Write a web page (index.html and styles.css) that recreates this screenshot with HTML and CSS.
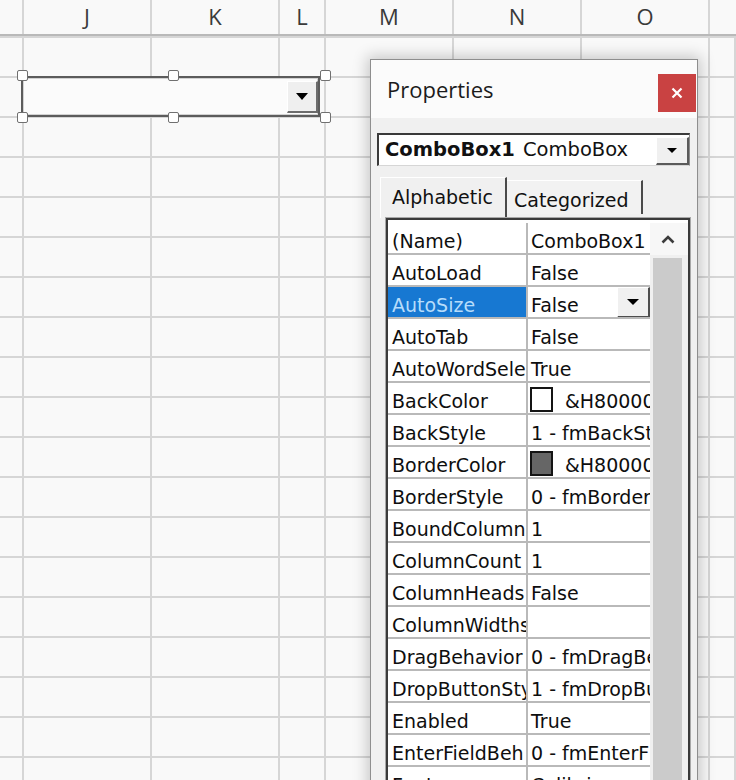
FILE: index.html
```html
<!DOCTYPE html>
<html lang="en">
<head>
<meta charset="utf-8">
<title>Properties - ComboBox1</title>
<link rel="stylesheet" href="styles.css">
</head>
<body>
<div class="sheet">
  <div class="col-heads">
    <div class="ch c-i"></div>
    <div class="ch c-j">J</div>
    <div class="ch c-k">K</div>
    <div class="ch c-l">L</div>
    <div class="ch c-m">M</div>
    <div class="ch c-n">N</div>
    <div class="ch c-o">O</div>
    <div class="ch c-p"></div>
  </div>
  <div class="cells">
    <div class="col c-i"></div>
    <div class="col c-j"></div>
    <div class="col c-k"></div>
    <div class="col c-l"></div>
    <div class="col c-m"></div>
    <div class="col c-n"></div>
    <div class="col c-o"></div>
    <div class="col c-p"></div>
  </div>

  <div class="sel">
    <div class="sheet-combo">
      <div class="dd-btn"><span class="tri"></span></div>
    </div>
    <span class="handle h-tl"></span>
    <span class="handle h-tm"></span>
    <span class="handle h-tr"></span>
    <span class="handle h-bl"></span>
    <span class="handle h-bm"></span>
    <span class="handle h-br"></span>
  </div>
</div>

<div class="props">
  <div class="title">
    <span class="title-text">Properties</span>
    <div class="close">
      <svg width="12" height="12" viewBox="0 0 12 12"><path d="M1.5 1.5L10.5 10.5M10.5 1.5L1.5 10.5" stroke="#fff" stroke-width="2.2" fill="none"/></svg>
    </div>
  </div>

  <div class="objcombo">
    <span class="objname"><b>ComboBox1</b> <span class="objtype">ComboBox</span></span>
    <div class="obj-btn"><span class="tri tri-sm"></span></div>
  </div>

  <div class="tabs">
    <div class="tab tab-on">Alphabetic</div>
    <div class="tab tab-off">Categorized</div>
  </div>

  <div class="frame">
    <div class="rows">
      <div class="row"><div class="k">(Name)</div><div class="v">ComboBox1</div></div>
      <div class="row"><div class="k">AutoLoad</div><div class="v">False</div></div>
      <div class="row"><div class="k k-sel">AutoSize</div><div class="v v-dd"><span>False</span><div class="cell-btn"><span class="tri"></span></div></div></div>
      <div class="row"><div class="k">AutoTab</div><div class="v">False</div></div>
      <div class="row"><div class="k">AutoWordSele</div><div class="v">True</div></div>
      <div class="row"><div class="k">BackColor</div><div class="v v-sw"><span class="swatch sw-white"></span>&amp;H80000</div></div>
      <div class="row"><div class="k">BackStyle</div><div class="v">1 - fmBackSt</div></div>
      <div class="row"><div class="k">BorderColor</div><div class="v v-sw"><span class="swatch sw-gray"></span>&amp;H80000</div></div>
      <div class="row"><div class="k">BorderStyle</div><div class="v">0 - fmBorder</div></div>
      <div class="row"><div class="k">BoundColumn</div><div class="v">1</div></div>
      <div class="row"><div class="k">ColumnCount</div><div class="v">1</div></div>
      <div class="row"><div class="k">ColumnHeads</div><div class="v">False</div></div>
      <div class="row"><div class="k">ColumnWidths</div><div class="v"></div></div>
      <div class="row"><div class="k">DragBehavior</div><div class="v">0 - fmDragBe</div></div>
      <div class="row"><div class="k">DropButtonSty</div><div class="v">1 - fmDropBu</div></div>
      <div class="row"><div class="k">Enabled</div><div class="v">True</div></div>
      <div class="row"><div class="k">EnterFieldBeh</div><div class="v">0 - fmEnterF</div></div>
      <div class="row"><div class="k">Font</div><div class="v">Calibri</div></div>
    </div>
    <div class="vscroll">
      <div class="up">
        <svg width="14" height="9" viewBox="0 0 14 9"><polyline points="1.5,7.5 7,2 12.5,7.5" stroke="#3c3c3c" stroke-width="2.6" fill="none"/></svg>
      </div>
      <div class="thumb"></div>
    </div>
  </div>
</div>
</body>
</html>
```

FILE: styles.css
```css
html, body {
  margin: 0;
  padding: 0;
}
body {
  width: 736px;
  height: 780px;
  overflow: hidden;
  position: relative;
  background: #f9f9f9;
  font-family: "Open Sans", "Noto Sans", sans-serif;
}

/* ---------- spreadsheet ---------- */
.sheet {
  position: relative;
  height: 780px;
}
.col-heads {
  display: flex;
  height: 36px;
  box-sizing: border-box;
  border-bottom: 2px solid #b9b9b9;
}
.ch {
  box-sizing: border-box;
  border-right: 2px solid #d6d6d6;
  text-align: center;
  font-size: 22px;
  line-height: 32px;
  color: #3a3a3a;
}
.c-i { width: 24px; flex: none; }
.c-j { width: 128px; flex: none; }
.c-k { width: 128px; flex: none; }
.c-l { width: 46px; flex: none; }
.c-m { width: 128px; flex: none; }
.c-n { width: 128px; flex: none; }
.c-o { width: 128px; flex: none; }
.c-p { flex: 1; border-right: none; }

.cells {
  display: flex;
  height: 744px;
  background-image: linear-gradient(to bottom, transparent 38px, #d6d6d6 38px);
  background-size: 100% 40px;
  background-position: 0 2px;
}
.col {
  box-sizing: border-box;
  border-right: 2px solid #d6d6d6;
}

/* selected combobox on the sheet */
.sel {
  position: absolute;
  left: 17px;
  top: 70px;
  width: 314px;
  height: 53px;
}
.sheet-combo {
  margin: 6px 0 0 4px;
  width: 299px;
  height: 41px;
  box-sizing: border-box;
  border: 2px solid #5c5c5c;
  background: #fbfbfb;
  box-shadow: inset 0 0 0 1px #d2d2d2;
  display: flex;
  justify-content: flex-end;
  align-items: center;
}
.dd-btn {
  width: 31px;
  height: 32px;
  box-sizing: border-box;
  background: #efefef;
  border-top: 1px solid #fff;
  border-left: 1px solid #fff;
  border-right: 2px solid #6c6c6c;
  border-bottom: 2px solid #6c6c6c;
  display: flex;
  align-items: center;
  justify-content: center;
}
.tri {
  width: 0;
  height: 0;
  border-left: 6.5px solid transparent;
  border-right: 6.5px solid transparent;
  border-top: 7px solid #000;
}
.tri-sm {
  border-left-width: 5px;
  border-right-width: 5px;
  border-top-width: 5px;
}
.handle {
  position: absolute;
  width: 11px;
  height: 11px;
  box-sizing: border-box;
  border: 1px solid #707070;
  border-radius: 2px;
  background: #fff;
}
.h-tl { left: 0; top: 0; }
.h-tm { left: 151px; top: 0; }
.h-tr { left: 303px; top: 0; }
.h-bl { left: 0; top: 42px; }
.h-bm { left: 151px; top: 42px; }
.h-br { left: 303px; top: 42px; }

/* ---------- properties window ---------- */
.props {
  position: absolute;
  left: 370px;
  top: 59px;
  width: 328px;
  height: 740px;
  box-sizing: border-box;
  border: 1px solid #8e8e8e;
  background: #f0f0f0;
  box-shadow: 0 0 14px 3px rgba(0, 0, 0, 0.2);
  display: flex;
  flex-direction: column;
  overflow: hidden;
}
.title {
  height: 58px;
  flex: none;
  box-sizing: border-box;
  padding: 14px 1px 0 16px;
  background: #fbfbfb;
  display: flex;
  justify-content: space-between;
  align-items: flex-start;
}
.title-text {
  font-family: "Open Sans", "Noto Sans", sans-serif;
  font-size: 22px;
  line-height: 30px;
  color: #1b1b1b;
}
.close {
  width: 38px;
  height: 38px;
  background: #c94242;
  display: flex;
  align-items: center;
  justify-content: center;
}

.objcombo {
  flex: none;
  margin: 15px 7px 0 6px;
  height: 33px;
  box-sizing: border-box;
  border-top: 2px solid #3a3a3a;
  border-left: 2px solid #3a3a3a;
  border-right: 1px solid #8a8a8a;
  border-bottom: 1px solid #d6d6d6;
  background: #fff;
  display: flex;
  justify-content: space-between;
  align-items: center;
  font-family: "DejaVu Sans", sans-serif;
  font-size: 19.5px;
  color: #111;
}
.objname {
  padding-left: 6px;
  white-space: nowrap;
  line-height: 28px;
}
.objtype {
  margin-left: 2px;
}
.obj-btn {
  align-self: flex-end;
  width: 33px;
  height: 28px;
  box-sizing: border-box;
  background: #f0f0f0;
  border-top: 1px solid #fff;
  border-left: 1px solid #fff;
  border-right: 2px solid #5a5a5a;
  border-bottom: 2px solid #5a5a5a;
  display: flex;
  align-items: center;
  justify-content: center;
}

.tabs {
  flex: none;
  display: flex;
  align-items: flex-start;
  margin: 11px 0 0 9px;
  height: 41px;
  font-family: "DejaVu Sans", sans-serif;
  font-size: 19px;
  color: #111;
}
.tab {
  box-sizing: border-box;
  border-top: 1px solid #fff;
  border-right: 2px solid #4a4a4a;
  line-height: 30px;
  white-space: nowrap;
}
.tab-on {
  width: 127px;
  height: 41px;
  padding: 4px 0 0 11px;
  border-left: 1px solid #fff;
  background: #f0f0f0;
}
.tab-off {
  width: 136px;
  height: 34px;
  margin-top: 3px;
  padding: 4px 0 0 7px;
  background: #f2f2f2;
}

.frame {
  flex: 1;
  display: flex;
  margin: 0 0 0 15px;
  width: 304px;
  box-sizing: border-box;
  border: 2px solid #3a3a3a;
  border-bottom: none;
  box-shadow: 0 0 0 1px #a8a8a8;
  padding-top: 3px;
  background: #fff;
  font-family: "DejaVu Sans", sans-serif;
  font-size: 19px;
  color: #0e0e0e;
}
.rows {
  width: 262px;
  flex: none;
}
.row {
  display: flex;
  height: 32px;
  box-sizing: border-box;
  border-bottom: 2px solid #b9b9b9;
}
.k, .v {
  height: 30px;
  box-sizing: border-box;
  padding-top: 3px;
  line-height: 30px;
  white-space: nowrap;
  overflow: hidden;
}
.k {
  width: 140px;
  flex: none;
  padding-left: 4px;
  border-right: 2px solid #b9b9b9;
}
.v {
  width: 122px;
  flex: none;
  padding-left: 3px;
}
.k-sel {
  background: #1778d2;
  color: #b6dcfb;
}
.v-dd {
  display: flex;
  justify-content: space-between;
  padding-top: 0;
}
.v-dd > span {
  padding-top: 3px;
}
.cell-btn {
  width: 33px;
  height: 31px;
  flex: none;
  box-sizing: border-box;
  background: #f0f0f0;
  border-top: 1px solid #fff;
  border-left: 1px solid #fff;
  border-right: 2px solid #4e4e4e;
  border-bottom: 2px solid #4e4e4e;
  display: flex;
  align-items: center;
  justify-content: center;
}
.cell-btn .tri {
  border-left-width: 6px;
  border-right-width: 6px;
  border-top-width: 6px;
}
.v-sw {
  display: flex;
  align-items: flex-start;
  padding-left: 2px;
}
.swatch {
  flex: none;
  width: 23px;
  height: 25px;
  box-sizing: border-box;
  border: 2px solid #141414;
  margin: 1px 12px 0 0;
}
.sw-white { background: #fff; }
.sw-gray { background: #666; }

.vscroll {
  width: 38px;
  flex: none;
  background: #f0f0f0;
  display: flex;
  flex-direction: column;
}
.up {
  height: 32px;
  flex: none;
  background: #f7f7f7;
  display: flex;
  align-items: center;
  justify-content: center;
  padding-right: 3px;
}
.thumb {
  flex: 1;
  margin: 3px 6px 0 3px;
  background: #cbcbcb;
}
```
